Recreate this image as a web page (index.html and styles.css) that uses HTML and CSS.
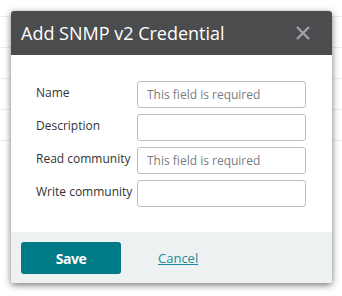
FILE: index.html
```html
<!DOCTYPE html>
<html>
<head>
    <link rel="stylesheet" href="styles.css">
</head>
<body>
    <div class="page">
        <div class="row first"></div>
        <div class="row"></div>
        <div class="row"></div>
        <div class="row"></div>
        <div class="row"></div>
    </div>

    <div class="modal">
        <div class="modal-header">
            <div class="modal-title">Add SNMP v2 Credential</div>
            <svg class="close" width="16" height="16" viewBox="0 0 16 16">
                <path d="M2 2 L14 14 M14 2 L2 14" stroke="#a3a6a9" stroke-width="2.2" fill="none"/>
            </svg>
        </div>
        <div class="modal-body">
            <label class="field-label">Name</label>
            <input class="field" type="text" placeholder="This field is required">
            <label class="field-label">Description</label>
            <input class="field" type="text">
            <label class="field-label">Read community</label>
            <input class="field" type="text" placeholder="This field is required">
            <label class="field-label">Write community</label>
            <input class="field" type="text">
        </div>
        <div class="modal-footer">
            <button class="btn-save">Save</button>
            <a class="cancel" href="#">Cancel</a>
        </div>
    </div>
</body>
</html>
```

FILE: styles.css
```css
:root {
    --header-bg: #4b4c4e;
    --footer-bg: #edf1f2;
    --teal: #007a87;
    --link: #1f8a99;
    --text-color: #333;
    --border: #b9bec2;
}

body {
    margin: 0;
    font-family: "Open Sans", sans-serif;
    background: #fff;
    color: var(--text-color);
}

.page {
    padding-top: 0;
}

.row {
    height: 30px;
    border-bottom: 1px solid #ececec;
}

.row.first {
    height: 16px;
}

.modal {
    position: absolute;
    left: 11px;
    top: 11px;
    width: 321px;
    background: #fff;
    border-radius: 3px;
    box-shadow: 0 2px 7px rgba(0, 0, 0, 0.55);
    overflow: hidden;
}

.modal-header {
    height: 44px;
    background: var(--header-bg);
    display: flex;
    align-items: center;
    justify-content: space-between;
    padding: 0 21px 0 10px;
}

.modal-title {
    color: #fff;
    font-size: 18px;
    line-height: 24px;
}

.close {
    display: block;
}

.modal-body {
    display: grid;
    grid-template-columns: 96px 169px;
    grid-auto-rows: 27px;
    column-gap: 5px;
    row-gap: 6px;
    padding: 26px 26px 25px 25px;
    align-items: center;
}

.field-label {
    font-size: 12px;
    color: var(--text-color);
    white-space: nowrap;
    position: relative;
    top: -2px;
}

.field {
    box-sizing: border-box;
    width: 169px;
    height: 27px;
    border: 1px solid var(--border);
    border-radius: 3px;
    padding: 0 9px;
    font-family: "Open Sans", sans-serif;
    font-size: 12px;
    color: var(--text-color);
    outline: none;
}

.field::placeholder {
    color: #7a7d80;
}

.modal-footer {
    background: var(--footer-bg);
    height: 51px;
    box-sizing: border-box;
    padding: 10px 10px 9px;
    display: flex;
    align-items: center;
    gap: 37px;
}

.btn-save {
    width: 100px;
    height: 32px;
    border: none;
    border-radius: 3px;
    background: var(--teal);
    color: #fff;
    font-family: "Open Sans", sans-serif;
    font-weight: bold;
    font-size: 14px;
    letter-spacing: -0.5px;
}

.cancel {
    color: var(--link);
    font-size: 13px;
    text-decoration: underline;
}
```
